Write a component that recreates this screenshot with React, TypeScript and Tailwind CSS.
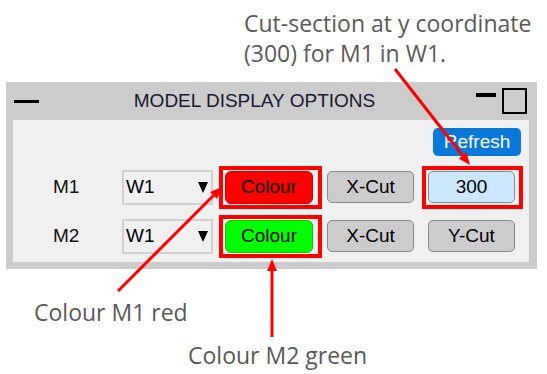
import React from 'react'

type Pt = [number, number]

// red callout arrow: line from a to b with a filled head at b
function Arrow({ from, to }: { from: Pt; to: Pt }) {
  const [x1, y1] = from
  const [x2, y2] = to
  const len = Math.hypot(x2 - x1, y2 - y1)
  const ux = (x2 - x1) / len
  const uy = (y2 - y1) / len
  const head = 12
  const half = 5
  const bx = x2 - ux * head
  const by = y2 - uy * head
  const pts = `${x2},${y2} ${bx - uy * half},${by + ux * half} ${bx + uy * half},${by - ux * half}`
  return (
    <g>
      <line x1={x1} y1={y1} x2={bx} y2={by} stroke="#ff0000" strokeWidth={3} />
      <polygon points={pts} fill="#ff0000" />
    </g>
  )
}

function GreyButton({ label }: { label: string }) {
  return (
    <div className="w-[87px] h-[32px] rounded-[5px] border-[1.5px] border-[#8a8a8a] bg-[#cccccc] flex items-center justify-center text-black">
      {label}
    </div>
  )
}

function Select() {
  return (
    <div className="w-[91px] h-[35px] border-2 border-[#d0d0d0] bg-[#f0f0f0] flex items-center justify-between pl-[2px] pr-[3px]">
      <span>W1</span>
      <svg width="10" height="11" viewBox="0 0 10 11">
        <polygon points="0,0 10,0 5,11" fill="#000" />
      </svg>
    </div>
  )
}

function Row({ name, colour, last }: { name: string; colour: string; last: React.ReactNode }) {
  return (
    <div className="flex items-center h-[44px]">
      <div className="w-[109px] pl-[40px] text-[#111]">{name}</div>
      <Select />
      <div className="ml-[6px] w-[103px] h-[43px] border-4 border-[#ff0000] flex items-center pl-[2px]">
        <div
          className={
            colour === 'red'
              ? 'w-[88px] h-[33px] rounded-[6px] border border-[#d00000] bg-[#ff0000] flex items-center justify-center text-black'
              : 'w-[88px] h-[33px] rounded-[6px] border border-[#00cc00] bg-[#00ff00] flex items-center justify-center text-black'
          }
        >
          Colour
        </div>
      </div>
      <div className="ml-[5px]">
        <GreyButton label="X-Cut" />
      </div>
      {last}
    </div>
  )
}

export default function App() {
  return (
    <div className="relative w-[547px] h-[374px] overflow-hidden bg-white pt-[82px] pl-[6px]">
      {/* Panel */}
      <div className="w-[531px] h-[187px] bg-[#cccccc] flex flex-col font-['Liberation_Sans',Arial,sans-serif] text-[19px]">
        <div className="h-[38px] flex items-center">
          <div className="ml-[8px] w-[25px] h-[3px] bg-black" />
          <div className="flex-1 text-center text-[#181830] pr-[6px]">MODEL DISPLAY OPTIONS</div>
          <div className="self-start mt-[11px] w-[20px] h-[4px] bg-black" />
          <div className="ml-[6px] mr-[10px] w-[25px] h-[26px] border-2 border-black bg-[#cccccc]" />
        </div>

        <div className="flex-1 ml-[7px] mr-[8px] mb-[7px] bg-[#f0f0f0]">
          <div className="flex justify-end pt-[8px] pr-[8px]">
            <div className="w-[88px] h-[28px] rounded-[5px] bg-[#0a78d8] text-white flex items-center justify-center">
              Refresh
            </div>
          </div>

          <div className="mt-[9px] flex flex-col gap-[5px]">
            <Row
              name="M1"
              colour="red"
              last={
                <div className="ml-[8px] w-[101px] h-[43px] border-4 border-[#ff0000] flex items-center pl-[2px]">
                  <div className="w-[87px] h-[32px] rounded-[5px] border-[1.5px] border-[#8a8a8a] bg-[#cce8ff] flex items-center justify-center text-black">
                    300
                  </div>
                </div>
              }
            />
            <Row
              name="M2"
              colour="green"
              last={
                <div className="ml-[8px] w-[101px] pl-[6px]">
                  <GreyButton label="Y-Cut" />
                </div>
              }
            />
          </div>
        </div>
      </div>

      {/* Callouts */}
      <div className="absolute left-[244px] top-[8px] font-['Open_Sans',sans-serif] text-[23px] leading-[30px] text-[#595959] whitespace-nowrap">
        <p>Cut-section at y coordinate</p>
        <p>(300) for M1 in W1.</p>
      </div>
      <p className="absolute left-[34px] top-[297px] font-['Open_Sans',sans-serif] text-[23px] leading-[30px] text-[#595959] whitespace-nowrap">
        Colour M1 red
      </p>
      <p className="absolute left-[188px] top-[340px] font-['Open_Sans',sans-serif] text-[23px] leading-[30px] text-[#595959] whitespace-nowrap">
        Colour M2 green
      </p>

      <svg className="absolute inset-0 pointer-events-none" width="547" height="374">
        <Arrow from={[395, 69]} to={[470, 165]} />
        <Arrow from={[118, 291]} to={[222, 187]} />
        <Arrow from={[272, 337]} to={[272, 259]} />
      </svg>
    </div>
  )
}
